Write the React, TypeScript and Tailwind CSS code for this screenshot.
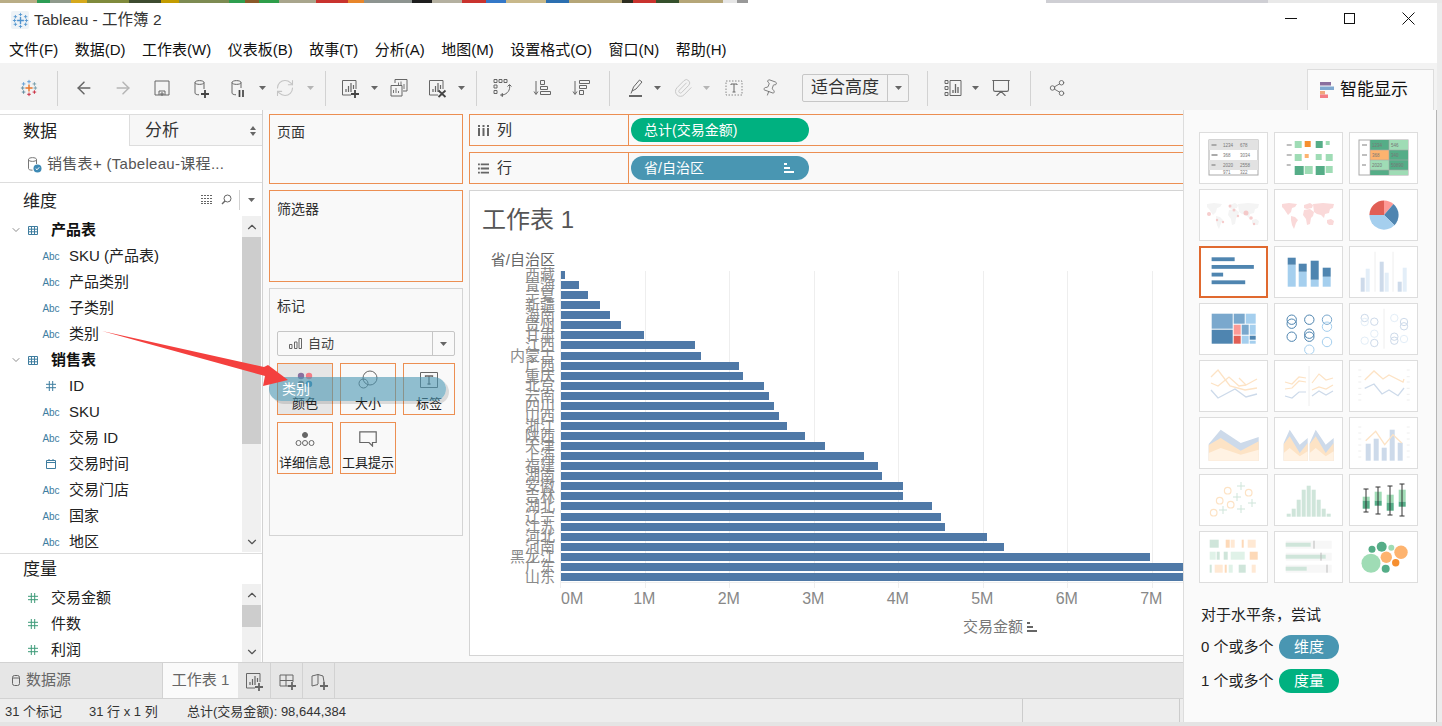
import React from "react";
import { ArrowLeft, ArrowRight, ChevronDown, ChevronUp, Paperclip, Pin, Presentation, RefreshCw, Share2 } from "lucide-react";

const stripColors: [number, string][] = [
  [37, "#b9ad86"], [13, "#2d9d55"], [21, "#8f9a8c"], [16, "#d6a91c"], [42, "#7f8a3c"], [32, "#3d4b30"], [18, "#c39c00"],
  [50, "#7d8b52"], [16, "#2f9e4f"], [14, "#8a5a2a"], [20, "#2e9e4a"], [37, "#a8a58c"], [32, "#c9332e"], [16, "#e8862a"],
  [48, "#8d9490"], [20, "#1e1e1e"], [30, "#b4b0a0"], [24, "#c9332e"], [20, "#3478c8"], [40, "#c8b88a"], [23, "#2c6fb0"],
  [53, "#b5a678"], [11, "#2e2e20"], [23, "#c9332e"], [23, "#35502c"], [44, "#b5a678"], [14, "#e6e6e6"], [11, "#999999"],
  [298, "#ffffff"], [222, "#cfcfd4"],
];

const STEEL = "#4f85b0";
const SKY = "#a5cfee";
const MINT = "#9fdcb5";
const JADE = "#55ad87";
const AMBER = "#fdb36f";
const FOG = "#cddaea";
const PEACH = "#fde3c5";
const CREAM = "#fff2e3";
const SAGE = "#cfe5da";

const provinces: [string, number][] = [
  ["西藏", 4], ["青海", 18], ["宁夏", 27], ["新疆", 39], ["海南", 49], ["贵州", 60], ["甘肃", 83], ["江西", 134],
  ["内蒙古", 140], ["广西", 178], ["重庆", 182], ["北京", 203], ["云南", 208], ["四川", 213], ["山西", 218], ["浙江", 226],
  ["陕西", 244], ["天津", 264], ["上海", 303], ["福建", 317], ["湖南", 321], ["安徽", 342], ["吉林", 342], ["湖北", 371],
  ["辽宁", 380], ["江苏", 384], ["河北", 426], ["河南", 443], ["黑龙江", 589], ["广东", 640], ["山东", 640],
];

const Caret = ({ color = "#666666" }: { color?: string }) => (
  <svg width="7" height="4" viewBox="0 0 7 4" className="shrink-0"><path d="M0 0h7L3.5 4z" fill={color} /></svg>
);

const Sep = ({ className }: { className: string }) => <div className={`h-[35px] w-px shrink-0 bg-[#d2d2d2] ${className}`} />;

const Icon = ({ className = "", children }: { className?: string; children: React.ReactNode }) => (
  <svg width="20" height="20" viewBox="0 0 20 20" fill="none" stroke="#666666" strokeWidth="1" className={`shrink-0 ${className}`}>{children}</svg>
);

const PlusMark = ({ x = 15, y = 16, color = "#444444" }: { x?: number; y?: number; color?: string }) => (
  <path d={`M${x - 4} ${y}h8M${x} ${y - 4}v8`} stroke={color} strokeWidth="1.8" />
);

const BarsInFrame = () => (
  <>
    <path d="M11 17H2.5V2.5H16V11" />
    <path d="M6 14v-3M8.5 14V8M11 14V5M13.5 11V7" strokeWidth="1.2" />
  </>
);

const TableauMark = ({ size, colors }: { size: number; colors: string[] }) => (
  <svg width={size} height={size} viewBox="0 0 20 20" strokeWidth="1" className="shrink-0">
    <path d="M10 6v8M6 10h8" stroke={colors[0]} strokeWidth="1.6" />
    <path d="M10 1v4M8 3h4" stroke={colors[1]} />
    <path d="M10 15v4M8 17h4" stroke={colors[2]} />
    <path d="M1 10h4M3 8v4" stroke={colors[3]} />
    <path d="M15 10h4M17 8v4" stroke={colors[4]} />
    <path d="M4 3.5v4M2 5.5h4" stroke={colors[1]} />
    <path d="M16 3.5v4M14 5.5h4" stroke={colors[4]} />
    <path d="M4 12.5v4M2 14.5h4" stroke={colors[3]} />
    <path d="M16 12.5v4M14 14.5h4" stroke={colors[2]} />
  </svg>
);

const TableGlyph = () => (
  <svg width="10" height="9" viewBox="0 0 10 9" fill="none" stroke="#3e7d9f" strokeWidth="1" className="shrink-0">
    <path d="M.5.5h9v8h-9zM.5 3.2h9M.5 5.8h9M3.5.5v8M6.5.5v8" />
  </svg>
);

const HashGlyph = ({ color }: { color: string }) => (
  <svg width="10" height="10" viewBox="0 0 10 10" fill="none" stroke={color} strokeWidth="1" className="shrink-0">
    <path d="M3.3 0v10M6.7 0v10M0 3.3h10M0 6.7h10" />
  </svg>
);

const SortGlyph = ({ color = "#666666" }: { color?: string }) => (
  <svg width="11" height="10" viewBox="0 0 11 10" className="shrink-0" fill={color}>
    <path d="M0 0h3v2H0zM0 4h6v2H0zM0 8h10v2H0z" />
  </svg>
);

const Field = ({ kind, name }: { kind: "abc" | "num" | "date"; name: string }) => (
  <div className="flex h-[26px] items-center pl-[43px]">
    <div className="flex w-[16px] justify-center">
      {kind === "abc" && <span className="text-[10px] text-[#3e7d9f]">Abc</span>}
      {kind === "num" && <HashGlyph color="#3e7d9f" />}
      {kind === "date" && (
        <svg width="10" height="10" viewBox="0 0 10 10" fill="none" stroke="#3e7d9f"><path d="M.5 1.5h9v8h-9zM.5 3.5h9M3 0v2M7 0v2" /></svg>
      )}
    </div>
    <span className="ml-[10px] text-[15px] text-[#222222]">{name}</span>
  </div>
);

const TableHead = ({ name }: { name: string }) => (
  <div className="flex h-[26px] items-center pl-[10px]">
    <ChevronDown size={12} color="#666666" strokeWidth={1.5} />
    <div className="ml-[6px] flex w-[10px]"><TableGlyph /></div>
    <span className="ml-[13px] text-[15px] font-bold text-[#111111]">{name}</span>
  </div>
);

const Measure = ({ name }: { name: string }) => (
  <div className="flex h-[26px] items-center pl-[28px]">
    <HashGlyph color="#3c9a78" />
    <span className="ml-[13px] text-[15px] text-[#222222]">{name}</span>
  </div>
);

const ScrollBar = ({ thumbClass }: { thumbClass: string }) => (
  <div className="mr-px flex w-[19px] shrink-0 flex-col bg-[#f0f0f0]">
    <div className="flex h-[21px] shrink-0 items-center justify-center"><ChevronUp size={14} color="#555555" strokeWidth={2} /></div>
    <div className={`shrink-0 bg-[#cdcdcd] ${thumbClass}`} />
    <div className="flex-1" />
    <div className="flex h-[21px] shrink-0 items-center justify-center"><ChevronDown size={14} color="#555555" strokeWidth={2} /></div>
  </div>
);

const MarkBtn = ({ label, active, children }: { label: string; active?: boolean; children: React.ReactNode }) => (
  <div className={`flex h-[52px] flex-col items-center border border-[#ec8f52] ${active ? "bg-[#e6e6e6]" : ""}`}>
    <div className="flex h-[32px] w-full items-center justify-center">{children}</div>
    <span className="text-[13px] leading-[16px] whitespace-nowrap text-[#222222]">{label}</span>
  </div>
);

const Shelf = ({ icon, label, pill, color, sorted }: { icon: React.ReactNode; label: string; pill: string; color: string; sorted?: boolean }) => (
  <div className="flex h-[32px] w-[740px] border border-[#ec8f52]">
    <div className="flex w-[159px] shrink-0 items-center border-r border-[#ec8f52] pl-[8px]">
      <div className="flex w-[11px] justify-center">{icon}</div>
      <span className="ml-[8px] text-[15px] text-[#333333]">{label}</span>
    </div>
    <div className="flex items-center pl-[2px]">
      <div className={`flex h-[24px] w-[178px] items-center justify-between rounded-full pr-[14px] pl-[13px] text-[14px] text-white ${color}`}>
        <span>{pill}</span>
        {sorted && <SortGlyph color="#ffffff" />}
      </div>
    </div>
  </div>
);

const TextRows = ({ rows, x }: { rows: [number, string, string][]; x: [number, number] }) => (
  <g fontSize="4.5" fill="#777777" stroke="none">
    {rows.map(([y, a, b]) => (
      <React.Fragment key={y}>
        <text x={x[0]} y={y}>{a}</text>
        <text x={x[1]} y={y}>{b}</text>
      </React.Fragment>
    ))}
  </g>
);

const World = ({ fill }: { fill: string }) => (
  <g fill={fill}>
    <path d="M8 15l7-1 8 1-2 3-3 1-1 4-3 3-2-3-2-3-2-2z" />
    <path d="M17 27l4 1 3 3-2 3-2 6-2-4-1-5z" />
    <path d="M30 16l6-2 3 2-1 3-5 1-3-1z" />
    <path d="M30 21l6-1 4 3-1 4-2 2-1 6-3 1-1-6-3-4z" />
    <path d="M39 15l10-1 11 1-1 4-3 1-1 4-4 1-1 4-3-3-4-1-3-2z" />
    <path d="M53 31l4-1 3 2-1 4-4 0-2-2z" />
  </g>
);

const thumbs: React.ReactNode[] = [
  <>
    <rect x="10" y="8" width="49" height="35" fill="#fff" stroke="#aaaaaa" />
    <path d="M10 8h49v10H10zM10 28h49v10H10z" fill="#e2e2e2" />
    <path d="M12.5 13h5M12.5 23h6M12.5 33h4" stroke="#aaaaaa" strokeWidth="2" />
    <TextRows rows={[[15, "1234", "678"], [25, "368", "3034"], [35, "2020", "2558"], [41.5, "971", "322"]]} x={[24, 41]} />
  </>,
  <>
    <path d="M12.7 13h5M12.7 23h5M12.7 33h4" stroke="#aaaaaa" strokeWidth="1.5" />
    <rect x="20.7" y="9" width="7" height="7" fill={MINT} />
    <rect x="30.7" y="9" width="6" height="6" fill="#f68f2f" />
    <rect x="41.7" y="9" width="7" height="7" fill={JADE} />
    <rect x="51.7" y="9" width="4" height="4" fill={MINT} />
    <rect x="20.7" y="22" width="7" height="7" fill={MINT} />
    <rect x="30.7" y="22" width="4" height="4" fill={AMBER} />
    <rect x="41.7" y="22" width="6" height="6" fill={MINT} />
    <rect x="51.7" y="22" width="7" height="7" fill={MINT} />
    <rect x="20.7" y="34" width="9" height="9" fill={JADE} />
    <rect x="30.7" y="34" width="8" height="8" fill={MINT} />
    <rect x="41.7" y="34" width="9" height="9" fill={JADE} />
    <rect x="51.7" y="34" width="7" height="7" fill={MINT} />
  </>,
  <>
    <rect x="10" y="8" width="49" height="35" fill="#fff" stroke="#aaaaaa" />
    <path d="M13 13h5M13 23h5M13 33h4" stroke="#aaaaaa" strokeWidth="1.5" />
    <rect x="21" y="8" width="19" height="10" fill={JADE} />
    <rect x="40" y="8" width="19" height="10" fill={MINT} />
    <rect x="21" y="18" width="19" height="10" fill={AMBER} />
    <rect x="40" y="18" width="19" height="10" fill={JADE} />
    <rect x="21" y="28" width="19" height="10" fill={MINT} />
    <rect x="40" y="28" width="19" height="10" fill={JADE} />
    <rect x="21" y="38" width="19" height="5" fill={JADE} />
    <rect x="40" y="38" width="19" height="5" fill={MINT} />
    <path d="M21 18h38M21 28h38M21 38h38M40 8v35M21 8v35" stroke="#aaaaaa" strokeWidth=".6" />
    <TextRows rows={[[14.5, "1234", "546"], [24.5, "368", "340"], [34.5, "2020", "50890"]]} x={[23, 42]} />
  </>,
  <>
    <World fill="#f4f4f4" />
    <g fill="#f4b8b8" opacity=".7">
      <circle cx="10" cy="25" r="2" /><circle cx="31" cy="17" r="1.5" /><circle cx="35" cy="21" r="1.5" />
      <circle cx="47" cy="24" r="2.5" /><circle cx="39" cy="27" r="1.2" /><circle cx="52" cy="29" r="1.8" />
      <circle cx="18" cy="31" r="1.2" /><circle cx="55" cy="35" r="1.2" /><circle cx="24" cy="33" r="1.2" />
    </g>
  </>,
  <World fill="#fad9d9" />,
  <>
    <path d="M35 26L20.4 26A14.6 14.6 0 0 1 35 11.4Z" fill="#e15f55" />
    <path d="M35 26L35 11.4A14.6 14.6 0 0 1 44.5 15Z" fill="#fd9a96" />
    <path d="M35 26L44.5 15A14.6 14.6 0 0 1 45.5 36.2Z" fill={STEEL} />
    <path d="M35 26L45.5 36.2A14.6 14.6 0 0 1 20.4 26Z" fill={SKY} />
  </>,
  <g fill={STEEL}>
    <rect x="11.7" y="10.7" width="24" height="4" />
    <rect x="11.7" y="18.7" width="44" height="4" />
    <rect x="11.7" y="26.7" width="12" height="4" />
    <rect x="11.7" y="34.7" width="35" height="4" />
  </g>,
  <>
    <rect x="13.7" y="18.7" width="8" height="22" fill={SKY} /><rect x="13.7" y="11.7" width="8" height="7" fill={STEEL} />
    <rect x="24.7" y="25.7" width="8" height="15" fill={SKY} /><rect x="24.7" y="17.7" width="8" height="8" fill={STEEL} />
    <rect x="36.7" y="33.7" width="8" height="7" fill={SKY} /><rect x="36.7" y="14.7" width="8" height="19" fill={STEEL} />
    <rect x="48.7" y="30.7" width="8" height="10" fill={SKY} /><rect x="48.7" y="21.7" width="8" height="9" fill={STEEL} />
  </>,
  <>
    <path d="M26 5.7v40M44 5.7v40" stroke="#eeeeee" />
    <rect x="11.7" y="31.7" width="4" height="14" fill={FOG} /><rect x="16.7" y="22.7" width="4" height="23" fill="#e3eef8" />
    <rect x="30.7" y="15.7" width="4" height="30" fill={FOG} /><rect x="35.7" y="26.7" width="4" height="19" fill="#e3eef8" />
    <rect x="48.7" y="35.7" width="4" height="10" fill={FOG} /><rect x="53.7" y="21.7" width="4" height="24" fill="#e3eef8" />
  </>,
  <>
    <rect x="12.7" y="10.7" width="21" height="15" fill="#7aa8cd" /><rect x="12.7" y="26.7" width="21" height="14" fill={STEEL} />
    <rect x="34.7" y="10.7" width="11" height="10" fill="#7aa8cd" /><rect x="46.7" y="10.7" width="10" height="10" fill={SKY} />
    <rect x="34.7" y="21.7" width="7" height="10" fill="#fd9a96" /><rect x="42.7" y="21.7" width="7" height="10" fill="#7aa8cd" />
    <rect x="50.7" y="21.7" width="6" height="10" fill={SKY} /><rect x="34.7" y="32.7" width="7" height="8" fill="#e15f55" />
    <rect x="42.7" y="32.7" width="7" height="8" fill={SKY} /><rect x="50.7" y="32.7" width="6" height="4" fill={STEEL} />
    <rect x="50.7" y="37.7" width="6" height="3" fill={SKY} />
  </>,
  <g fill="none" strokeWidth="1">
    <g stroke={STEEL}>
      <circle cx="17.7" cy="16.7" r="4.7" /><circle cx="17.7" cy="20.7" r="4.7" /><circle cx="17.7" cy="33.7" r="4.7" />
      <circle cx="35.3" cy="16.7" r="4.7" /><circle cx="35.3" cy="30.7" r="4.7" /><circle cx="35.3" cy="33.7" r="4.7" />
    </g>
    <g stroke="#7aa8cd"><circle cx="53" cy="16.7" r="4.7" /></g>
    <g stroke={SKY}><circle cx="53" cy="23.7" r="4.7" /><circle cx="53" cy="39" r="4.7" /><circle cx="35.3" cy="46.7" r="4.7" /></g>
  </g>,
  <>
    <path d="M35 5.7v40" stroke="#eeeeee" />
    <g fill="none" stroke={FOG} strokeWidth="1">
      <circle cx="15.7" cy="15" r="3.7" /><circle cx="25.3" cy="18.7" r="3.7" /><circle cx="25.3" cy="40" r="3.7" />
      <circle cx="55" cy="19" r="3.7" /><circle cx="55" cy="23.3" r="3.7" /><circle cx="45.3" cy="33.7" r="3.7" /><circle cx="45.3" cy="37.7" r="3.7" />
    </g>
    <g fill="none" stroke="#e3eef8" strokeWidth="1">
      <circle cx="15.7" cy="19" r="3.7" /><circle cx="25.3" cy="30.7" r="3.7" /><circle cx="15.7" cy="37.7" r="3.7" />
      <circle cx="45.3" cy="15" r="3.7" /><circle cx="55" cy="36" r="3.7" />
    </g>
  </>,
  <g fill="none" strokeWidth="1.3">
    <polyline points="12,17 19,10 31,26 46,30 58,28" stroke={PEACH} />
    <polyline points="12,23 19,26 30,17 40,26 47,25" stroke={PEACH} />
    <polyline points="40,18 47,25 58,19" stroke={PEACH} />
    <polyline points="12,30 19,38 36,29 47,37 58,34" stroke={FOG} />
  </g>,
  <>
    <path d="M35 6v40" stroke="#eeeeee" />
    <g fill="none" strokeWidth="1.2">
      <polyline points="11,22 18,24 25,17 32,18" stroke={PEACH} />
      <polyline points="11,29 18,28 25,21 32,22" stroke={PEACH} />
      <polyline points="11,36 18,38 25,32 32,32" stroke={FOG} />
      <polyline points="38,23 45,14 52,20 59,18" stroke={PEACH} />
      <polyline points="38,30 45,27 52,29 59,25" stroke={PEACH} />
      <polyline points="38,36 45,31 52,35 59,31" stroke={FOG} />
    </g>
  </>,
  <>
    <path d="M9.3 10h3M9.3 16.7h3M9.3 22h3M9.3 28.3h3M9.3 34.3h3M9.3 40h3M57.7 10h3M57.7 16.7h3M57.7 22h3M57.7 28.3h3M57.7 34.3h3M57.7 40h3" stroke="#eeeeee" />
    <polyline points="15.7,20 25,11 34,19 40,15 54,22 55,19" fill="none" stroke={PEACH} strokeWidth="1.3" />
    <polyline points="15.7,28.3 25,24 33,34 40,30 49,35.7 55,28" fill="none" stroke={FOG} strokeWidth="1.3" />
  </>,
  <>
    <path d="M9.7 27L21.7 12.7 41.7 26 59.7 20V43.7H9.7Z" fill={FOG} />
    <path d="M9.7 28L21.7 21 41.7 33.7 59.7 24.3V43.7H9.7Z" fill={PEACH} />
    <path d="M9.7 36L21.7 31 41.7 37.7 59.7 32.7V43.7H9.7Z" fill={CREAM} />
  </>,
  <>
    <path d="M9.7 26L15.7 12.7 25.7 27.7 33.7 21V43.7H9.7Z" fill={FOG} />
    <path d="M9.7 27L15.7 19.3 25.7 36 33.7 26V43.7H9.7Z" fill={PEACH} />
    <path d="M9.7 36L15.7 31 25.7 39.3 33.7 34.3V43.7H9.7Z" fill={CREAM} />
    <path d="M35.7 26L41.7 12.7 51.7 27.7 59.7 21V43.7H35.7Z" fill={FOG} />
    <path d="M35.7 27L41.7 19.3 51.7 36 59.7 26V43.7H35.7Z" fill={PEACH} />
    <path d="M35.7 36L41.7 31 51.7 39.3 59.7 34.3V43.7H35.7Z" fill={CREAM} />
  </>,
  <>
    <path d="M9.3 10h3M9.3 16h3M9.3 22h3M9.3 28h3M9.3 34h3M9.3 40h3M57.7 10h3M57.7 16h3M57.7 22h3M57.7 28h3M57.7 34h3M57.7 40h3" stroke="#eeeeee" />
    <g fill={FOG}>
      <rect x="16.7" y="26.7" width="5" height="17" /><rect x="24.7" y="21.7" width="5" height="22" /><rect x="32.7" y="30.7" width="5" height="13" />
      <rect x="40.7" y="12.7" width="5" height="31" /><rect x="48.7" y="25.7" width="5" height="18" />
    </g>
    <polyline points="16.7,23.7 26.7,14.3 35.7,27.7 44,17.7 52.7,26" fill="none" stroke={PEACH} strokeWidth="1.3" />
  </>,
  <>
    <g fill="none" stroke={PEACH} strokeWidth="1.2">
      <circle cx="28.7" cy="16.7" r="3.3" /><circle cx="49.7" cy="18.7" r="3.3" /><circle cx="20.7" cy="26.7" r="3.3" />
      <circle cx="31.7" cy="30.7" r="3.3" /><circle cx="14.7" cy="38.7" r="3.3" />
    </g>
    <path d="M38 12h8M42 8v8M34 23h8M38 19v8M49 29h8M53 25v8M20 36h8M24 32v8M38 35h8M42 31v8" stroke={SAGE} strokeWidth="1" />
  </>,
  <g fill={SAGE}>
    {[39.7, 34.7, 25.7, 15.7, 11.7, 15.7, 25.7, 34.7, 39.7].map((y, i) => (
      <rect key={i} x={12.7 + i * 5} y={y} width="4" height={42.7 - y} />
    ))}
  </g>,
  <>
    {[[13.7, 22.7, 26.7, 34.7], [25.7, 17.7, 26.7, 31.7], [37.7, 20.7, 28.7, 36.7], [49.7, 15.7, 27.7, 32.7]].map(([x, a, b, c]) => (
      <React.Fragment key={x}>
        <rect x={x} y={a} width="7" height={b - a} fill={MINT} />
        <rect x={x} y={b} width="7" height={c - b} fill={JADE} />
      </React.Fragment>
    ))}
    <path d="M17 15v23M14.5 15h5M14.5 38h5M29 13v27M26.5 13h5M26.5 40h5M41 12v29M38.5 12h5M38.5 41h5M53 10v32M50.5 10h5M50.5 42h5" stroke="#333333" strokeWidth="1" />
  </>,
  <>
    <rect x="10.7" y="8.7" width="9" height="8" fill={SAGE} /><rect x="26.7" y="8.7" width="4" height="8" fill="#fdd9b8" /><rect x="31.7" y="8.7" width="4" height="8" fill="#ffe9d4" />
    <rect x="42.7" y="8.7" width="2" height="8" fill="#fdd9b8" /><rect x="48.7" y="8.7" width="8" height="8" fill="#ffe9d4" />
    <rect x="10.7" y="20.7" width="6" height="8" fill="#e0f2e8" /><rect x="17.7" y="20.7" width="3" height="8" fill={SAGE} /><rect x="24.7" y="20.7" width="4" height="8" fill={SAGE} />
    <rect x="31.7" y="20.7" width="14" height="8" fill="#e0f2e8" /><rect x="50.7" y="20.7" width="8" height="8" fill="#fdd9b8" />
    <rect x="10.7" y="33.7" width="2" height="8" fill={SAGE} /><rect x="15.7" y="33.7" width="8" height="8" fill="#ffe9d4" /><rect x="25.7" y="33.7" width="2" height="8" fill="#fdd9b8" />
    <rect x="29.7" y="33.7" width="4" height="8" fill="#e0f2e8" /><rect x="39.7" y="33.7" width="7" height="8" fill={SAGE} /><rect x="52.7" y="33.7" width="4" height="8" fill="#ffe9d4" />
  </>,
  <>
    {[[9.7, 25, 40], [21.7, 40, 47], [33.7, 21, 53]].map(([y, w, m]) => (
      <React.Fragment key={y}>
        <rect x="11.7" y={y} width="46" height="8" fill="#f7f7f7" />
        <rect x="11.7" y={y + 2} width={w} height="4" fill={SAGE} />
        <path d={`M${m} ${y}v8`} stroke="#bbbbbb" strokeWidth="1" />
      </React.Fragment>
    ))}
  </>,
  <>
    <circle cx="22" cy="32.3" r="9.5" fill={MINT} /><circle cx="23" cy="18.3" r="3.5" fill={JADE} /><circle cx="32.7" cy="15.7" r="5" fill={JADE} />
    <circle cx="42.3" cy="16.7" r="3" fill={MINT} /><circle cx="37.3" cy="26.3" r="5.7" fill={AMBER} /><circle cx="52" cy="21.3" r="6.7" fill={AMBER} />
    <circle cx="46.7" cy="31.7" r="3.7" fill="#f68f2f" /><circle cx="36.7" cy="37.7" r="4" fill={JADE} />
  </>,
];

export default function App() {
  return (
    <div className="relative flex h-[726px] w-[1442px] flex-col overflow-hidden bg-[#e9e9e9] font-[family-name:'Liberation_Sans','Noto_Sans_CJK_SC',sans-serif] text-[#222222]">
      <div className="flex h-[3px] shrink-0">
        {stripColors.map(([w, c], i) => (
          <div key={i} className="h-full" style={{ width: w, backgroundColor: c }} />
        ))}
      </div>

      <div className="flex min-h-0 flex-1">
        <div className="flex w-[1437px] shrink-0 flex-col">
          {/* title bar */}
          <div className="flex h-[35px] shrink-0 items-center bg-white pb-px pl-[11px]">
            <div className="flex h-[18px] w-[18px] items-center justify-center rounded-[2px] bg-[#eef3f7]">
              <TableauMark size={17} colors={["#4f93cf", "#4f93cf", "#4f93cf", "#4f93cf", "#4f93cf"]} />
            </div>
            <span className="ml-[5px] text-[15.5px] text-[#333333]">Tableau - 工作簿 2</span>
            <div className="mb-[3px] ml-auto flex items-center">
              <div className="h-px w-[12px] bg-[#111111]" />
              <div className="ml-[47px] h-[11px] w-[11px] border border-[#111111]" />
              <svg width="13" height="13" viewBox="0 0 13 13" className="mr-[22px] ml-[47px]" stroke="#111111"><path d="M.5.5l12 12M12.5.5l-12 12" /></svg>
            </div>
          </div>
          {/* menu */}
          <div className="flex h-[25px] shrink-0 items-center gap-[16.5px] bg-white pl-[9px] text-[15px] text-[#111111]">
            {["文件(F)", "数据(D)", "工作表(W)", "仪表板(B)", "故事(T)", "分析(A)", "地图(M)", "设置格式(O)", "窗口(N)", "帮助(H)"].map((m) => (
              <span key={m}>{m}</span>
            ))}
          </div>
          {/* toolbar */}
          <div className="flex h-[47px] shrink-0 items-center bg-[#f3f3f3] pt-[3px]">
            <div className="ml-[20px]"><TableauMark size={18} colors={["#e8762c", "#5b9bd5", "#c72035", "#59879b", "#7099a6"]} /></div>
            <Sep className="ml-[19px]" />
            <ArrowLeft size={20} color="#666666" strokeWidth={1.8} className="ml-[16px]" />
            <ArrowRight size={20} color="#b5b5b5" strokeWidth={1.8} className="ml-[19px]" />
            <Icon className="ml-[19px]">
              <path d="M3 3h14v14H3z" /><path d="M7 17v-4h6v4M9 15h2v2H9z" />
            </Icon>
            <Icon className="ml-[19px]">
              <path d="M4 4.5c0-2.5 9-2.5 9 0V11M4 4.5c0 2.5 9 2.5 9 0M4 4.5V15c0 1 1.5 1.7 4 1.8" /><PlusMark x={14} y={16} />
            </Icon>
            <Icon className="ml-[17px]">
              <path d="M4 4.5c0-2.5 9-2.5 9 0V10M4 4.5c0 2.5 9 2.5 9 0M4 4.5V15c0 1 1.5 1.7 4 1.8" /><path d="M11.5 12v7M15 12v7" stroke="#444444" strokeWidth="1.7" />
            </Icon>
            <div className="ml-[11px]"><Caret /></div>
            <RefreshCw size={20} color="#c4c4c4" strokeWidth={1.3} className="ml-[9px]" />
            <div className="ml-[12px]"><Caret color="#b5b5b5" /></div>
            <Sep className="ml-[11px]" />
            <Icon className="ml-[14px]"><BarsInFrame /><PlusMark x={15} y={16} /></Icon>
            <div className="ml-[11px]"><Caret /></div>
            <Icon className="ml-[11px]">
              <path d="M6 5V1.5h12V13h-4" /><path d="M2 7.5h11V18H2z" /><path d="M4.5 15v-3M7 15v-5M9.500 15v-2M9.5 4.5V7M12 3.5V7M15 6v5" strokeWidth=".9" />
            </Icon>
            <Icon className="ml-[18px]">
              <BarsInFrame /><path d="M11.5 12.5l7 6.5M18.5 12.5l-7 6.5" stroke="#444444" strokeWidth="1.8" />
            </Icon>
            <div className="ml-[11px]"><Caret /></div>
            <Sep className="ml-[11px]" />
            <Icon className="ml-[15px]">
              <path d="M2 1.5h3v3H2zM7 1.5h3v3H7zM12 1.5h3v3h-3zM2 7h3v3H2zM2 12.5h3v3H2z" />
              <path d="M17.5 7c1 5-2 9-7 10M8.5 17l2-1.5v3zM15.500 8.500l2-2 2 2" />
            </Icon>
            <Icon className="ml-[20px]">
              <path d="M4 3v13M2 13.5l2 3 2-3" /><path d="M8.5 2.5h4v4h-4zM8.5 8.5h7v3h-7zM8.5 13.5h10v3h-10z" />
            </Icon>
            <Icon className="ml-[19px]">
              <path d="M4 3v13M2 13.5l2 3 2-3" /><path d="M8.5 2.5h10v3h-10zM8.5 7.5h7v3h-7zM8.5 12.5h4v4h-4z" />
            </Icon>
            <Sep className="ml-[18px]" />
            <Icon className="ml-[16px]">
              <path d="M6 13l1.5-4 6-7 2.5 2-6 7z" /><path d="M6 13l-1 2.5" />
              <path d="M3 18h13" stroke="#444444" strokeWidth="1.6" />
            </Icon>
            <div className="ml-[8px]"><Caret /></div>
            <Paperclip size={20} color="#c8c8c8" strokeWidth={1.2} className="ml-[12px]" />
            <div className="ml-[10px]"><Caret color="#b5b5b5" /></div>
            <Icon className="ml-[14px]">
              <path d="M2 3h16v14H2z" strokeDasharray="1.5 1.5" stroke="#888888" /><path d="M7 7V6h6v1M10 6v8M8.5 14h3" />
            </Icon>
            <Pin size={18} color="#666666" strokeWidth={1} className="ml-[17px] rotate-[20deg]" />
            <div className="ml-[23px] flex h-[28px] w-[107px] shrink-0 items-center rounded-[2px] border border-[#c6c6c6]">
              <span className="w-[84px] pl-[8px] text-[17px] whitespace-nowrap text-[#333333]">适合高度</span>
              <div className="flex h-full flex-1 items-center justify-center border-l border-[#c6c6c6]"><Caret /></div>
            </div>
            <Sep className="ml-[18px]" />
            <Icon className="ml-[15px]">
              <path d="M2 2.5h3v3H2zM2 8.500h3v3H2zM2 14.500h3v3H2zM7 2.500h11v15H7z" /><path d="M10 15v-3M12.5 15V6M15 15v-6" strokeWidth="1.3" />
            </Icon>
            <div className="ml-[9px]"><Caret /></div>
            <Presentation size={20} color="#666666" strokeWidth={1.3} className="ml-[12px]" />
            <Sep className="ml-[19px]" />
            <Share2 size={18} color="#666666" strokeWidth={1.2} className="ml-[17px]" />
            <div className="ml-[241px] flex h-[41px] w-[127px] shrink-0 items-center self-end border-x border-t border-[#dddddd] bg-[#fafafa] pl-[12px]">
              <svg width="14" height="16" viewBox="0 0 14 16" className="shrink-0">
                <rect width="11" height="3.5" fill="#8a6f9e" /><rect y="4.5" width="14" height="3.5" fill="#7fa8d0" />
                <rect y="9" width="5" height="3.5" fill="#f0a77e" /><rect y="12.5" width="8" height="3.5" fill="#f47c85" />
              </svg>
              <span className="ml-[6px] text-[17px] whitespace-nowrap text-[#111111]">智能显示</span>
            </div>
          </div>

          <div className="flex min-h-0 flex-1">
            <div className="flex w-[1183px] shrink-0 flex-col">
              <div className="flex h-[552px] shrink-0">
                {/* data pane */}
                <div className="flex w-[263px] shrink-0 flex-col border-r border-[#d2d2d2] bg-white pt-[4px]">
                  <div className="flex h-[32px] shrink-0 border-t border-[#dddddd]">
                    <div className="flex w-[129px] items-center pt-[2px] pl-[23px] text-[17px] text-[#222222]">数据</div>
                    <div className="flex flex-1 items-center border-b border-l border-[#dddddd] bg-[#f7f7f7] pt-[2px] pl-[15px] text-[17px] text-[#333333]">
                      <span>分析</span>
                      <div className="mr-[6px] ml-auto flex flex-col gap-[2px]">
                        <svg width="6" height="4" viewBox="0 0 6 4"><path d="M0 4h6L3 0z" fill="#666666" /></svg>
                        <svg width="6" height="4" viewBox="0 0 6 4"><path d="M0 0h6L3 4z" fill="#666666" /></svg>
                      </div>
                    </div>
                  </div>
                  <div className="flex h-[37px] shrink-0 items-center border-b border-[#dddddd] pl-[27px]">
                    <svg width="15" height="17" viewBox="0 0 15 17" fill="none" className="shrink-0">
                      <path d="M1.5 3.5c0-2.5 8-2.5 8 0V8M1.5 3.5c0 2.5 8 2.5 8 0M1.5 3.5v9c0 1 1.5 1.7 4 1.7" stroke="#777777" />
                      <circle cx="10.5" cy="12.5" r="4" fill="#3e8ab5" />
                      <path d="M8.7 12.5l1.3 1.3 2.2-2.5" stroke="#ffffff" />
                    </svg>
                    <span className="ml-[5px] text-[15px] tracking-[0.3px] whitespace-nowrap text-[#555555]">销售表+ (Tabeleau-课程...</span>
                  </div>
                  <div className="flex h-[33px] shrink-0 items-center pl-[23px]">
                    <span className="pt-[4px] text-[17px] text-[#222222]">维度</span>
                    <svg width="12" height="9" viewBox="0 0 12 9" stroke="#666666" className="ml-auto" strokeDasharray="2 1">
                      <path d="M0 .5h12M0 3.5h12M0 6.500h12M0 8.500h12" />
                    </svg>
                    <svg width="11" height="11" viewBox="0 0 11 11" fill="none" stroke="#666666" className="ml-[8px]"><circle cx="6.5" cy="4.5" r="3.5" /><path d="M4 7l-3 3" strokeWidth="1.5" /></svg>
                    <div className="ml-[7px] h-[20px] w-px bg-[#d2d2d2]" />
                    <div className="mr-[7px] ml-[8px]"><Caret /></div>
                  </div>
                  <div className="flex h-[336px] shrink-0">
                    <div className="min-w-0 flex-1 overflow-hidden pt-px">
                      <TableHead name="产品表" />
                      <Field kind="abc" name="SKU (产品表)" />
                      <Field kind="abc" name="产品类别" />
                      <Field kind="abc" name="子类别" />
                      <Field kind="abc" name="类别" />
                      <TableHead name="销售表" />
                      <Field kind="num" name="ID" />
                      <Field kind="abc" name="SKU" />
                      <Field kind="abc" name="交易 ID" />
                      <Field kind="date" name="交易时间" />
                      <Field kind="abc" name="交易门店" />
                      <Field kind="abc" name="国家" />
                      <Field kind="abc" name="地区" />
                    </div>
                    <ScrollBar thumbClass="h-[207px]" />
                  </div>
                  <div className="mt-px h-px shrink-0 bg-[#dddddd]" />
                  <div className="flex h-[30px] shrink-0 items-center pt-[2px] pl-[23px] text-[17px] text-[#222222]">度量</div>
                  <div className="flex min-h-0 flex-1">
                    <div className="min-w-0 flex-1 overflow-hidden pt-px">
                      <Measure name="交易金额" />
                      <Measure name="件数" />
                      <Measure name="利润" />
                    </div>
                    <ScrollBar thumbClass="h-[22px]" />
                  </div>
                </div>

                {/* shelves + view */}
                <div className="flex min-w-0 flex-1 gap-[6px] overflow-hidden bg-[#f9f9f9] pt-[4px] pl-[6px]">
                  <div className="flex w-[194px] shrink-0 flex-col gap-[6px]">
                    <div className="h-[70px] border border-[#ec8f52] px-[7px] py-[7px] text-[14px] text-[#333333]">页面</div>
                    <div className="h-[92px] border border-[#ec8f52] px-[7px] py-[8px] text-[14px] text-[#333333]">筛选器</div>
                    <div className="h-[248px] border border-[#d4d4d4] px-[7px] pt-[7px]">
                      <div className="text-[14px] text-[#333333]">标记</div>
                      <div className="mt-[14px] flex h-[25px] items-center rounded-[2px] border border-[#c6c6c6] pl-[11px]">
                        <svg width="13" height="11" viewBox="0 0 13 11" fill="none" stroke="#666666" className="shrink-0"><path d="M.5 6.5h2.500v4H.5zM5.500 4h2.500v6.500H5.500zM10 .5h2.500v10H10z" /></svg>
                        <span className="ml-[6px] text-[13px] text-[#444444]">自动</span>
                        <div className="ml-auto flex h-full w-[22px] items-center justify-center border-l border-[#c6c6c6]"><Caret /></div>
                      </div>
                      <div className="mt-[7px] grid grid-cols-[56px_56px_52px] gap-x-[7px] gap-y-[7px]">
                        <MarkBtn label="颜色" active>
                          <svg width="18" height="18" viewBox="0 0 18 18"><circle cx="5" cy="5" r="3.2" fill="#8a6f9e" /><circle cx="13" cy="5" r="3.2" fill="#f47c85" /><circle cx="5" cy="13" r="3.2" fill="#7f7f7f" /><circle cx="13" cy="13" r="3.2" fill="#3e8ab5" /></svg>
                        </MarkBtn>
                        <MarkBtn label="大小">
                          <svg width="20" height="20" viewBox="0 0 20 20" fill="none" stroke="#666666"><circle cx="12" cy="8" r="7" /><circle cx="5.5" cy="13.5" r="4.5" /></svg>
                        </MarkBtn>
                        <MarkBtn label="标签">
                          <svg width="18" height="16" viewBox="0 0 18 16" fill="none" stroke="#666666"><path d="M.5.5h17v15H.5z" /><path d="M5.5 5V4h7v1M9 4v8M7.5 12h3" strokeWidth="1.3" /></svg>
                        </MarkBtn>
                        <MarkBtn label="详细信息">
                          <svg width="20" height="16" viewBox="0 0 20 16" fill="none" stroke="#666666"><circle cx="10" cy="4" r="2.5" fill="#666666" /><circle cx="3.5" cy="12" r="2.5" /><circle cx="10" cy="12" r="2.5" /><circle cx="16.5" cy="12" r="2.5" /></svg>
                        </MarkBtn>
                        <MarkBtn label="工具提示">
                          <svg width="18" height="16" viewBox="0 0 18 16" fill="none" stroke="#666666" strokeWidth="1.2"><path d="M.8.8h16.4v10.7h-3.700v3.500l-3.500-3.500H.8z" /></svg>
                        </MarkBtn>
                      </div>
                    </div>
                  </div>

                  <div className="flex w-[740px] shrink-0 flex-col gap-[6px]">
                    <Shelf
                      label="列"
                      pill="总计(交易金额)"
                      color="bg-[#00b180]"
                      icon={<svg width="11" height="11" viewBox="0 0 11 11" fill="#666666"><path d="M0 0h2v2H0zM4.5 0h2v2h-2zM9 0h2v2H9zM0 3h2v8H0zM4.5 3h2v8h-2zM9 3h2v8H9z" /></svg>}
                    />
                    <Shelf
                      label="行"
                      pill="省/自治区"
                      color="bg-[#4996b2]"
                      sorted
                      icon={<svg width="12" height="11" viewBox="0 0 12 11" fill="#666666"><path d="M0 0h2v2H0zM3 0h9v2H3zM0 4.500h2v2H0zM3 4.500h9v2H3zM0 9h2v2H0zM3 9h9v2H3z" /></svg>}
                    />
                    <div className="flex h-[466px] flex-col border border-[#d4d4d4] bg-white">
                      <div className="flex h-[58px] shrink-0 items-center pl-[12px] text-[24px] text-[#555555]">工作表 1</div>
                      <div className="flex h-[22px] w-[85px] shrink-0 items-center justify-end text-[15px] text-[#666666]">省/自治区</div>
                      <div className="relative shrink-0">
                        <div className="absolute top-0 bottom-[-5px] left-[90px] flex border-l border-[#eeeeee]">
                          {[1, 2, 3, 4, 5, 6, 7].map((t) => (
                            <div key={t} className="w-[84.5px] border-r border-[#eeeeee]" />
                          ))}
                        </div>
                        <div className="relative">
                          {provinces.map(([name, w], i) => (
                            <div key={name} className={`flex h-[10px] ${i === 8 || i === 24 ? "mt-px" : ""}`}>
                              <div className="w-[85px] shrink-0 text-right text-[15px] leading-[8px] whitespace-nowrap text-[#8a8a8a]">{name}</div>
                              <div className="ml-[6px] h-[8px] shrink-0 bg-[#4f79a7]" style={{ width: w }} />
                            </div>
                          ))}
                        </div>
                        <div className="relative mt-[-1px] ml-[90px] h-px bg-[#eeeeee]" />
                      </div>
                      <div className="flex h-[32px] shrink-0 items-center text-[16px] text-[#888888]">
                        <div className="w-[91px] shrink-0" />
                        <div className="w-[41px] shrink-0">0M</div>
                        {["1M", "2M", "3M", "4M", "5M", "6M", "7M"].map((t) => (
                          <div key={t} className="w-[84.5px] shrink-0 text-center">{t}</div>
                        ))}
                      </div>
                      <div className="flex h-[24px] shrink-0 items-center pl-[493px] text-[15px] text-[#777777]">
                        <span>交易金额</span>
                        <div className="ml-[4px]"><SortGlyph /></div>
                      </div>
                    </div>
                  </div>
                </div>
              </div>

              {/* sheet tabs */}
              <div className="flex h-[37px] shrink-0 items-stretch border-y border-[#d2d2d2] bg-[#e6e6e6]">
                <div className="flex w-[163px] shrink-0 items-center border-r border-[#d2d2d2] pl-[12px] text-[15px] text-[#666666]">
                  <svg width="8" height="11" viewBox="0 0 8 11" fill="none" stroke="#666666" className="shrink-0"><rect x=".5" y=".5" width="7" height="10" rx="2" /><path d="M.5 3h7" /></svg>
                  <span className="ml-[6px]">数据源</span>
                </div>
                <div className="flex w-[75px] shrink-0 items-center justify-center bg-[#fafafa] text-[15px] whitespace-nowrap text-[#666666]">工作表 1</div>
                <div className="flex w-[33px] items-center justify-center border-r border-[#d2d2d2]">
                  <Icon><BarsInFrame /><PlusMark x={15} y={16} color="#666666" /></Icon>
                </div>
                <div className="flex w-[32px] items-center justify-center border-r border-[#d2d2d2]">
                  <Icon><path d="M11 15H3V4h13v7M3 9.5h13M9 4v11" /><PlusMark x={15} y={15} color="#666666" /></Icon>
                </div>
                <div className="flex w-[32px] items-center justify-center border-r border-[#d2d2d2]">
                  <Icon><path d="M3 5l6-1.500 5 1.500 1 6M3 5v10l6-1.500M9 3.500V13" /><PlusMark x={15} y={15} color="#666666" /></Icon>
                </div>
              </div>
              {/* status bar */}
              <div className="flex h-[23px] shrink-0 items-center bg-[#ededed] pl-[5px] text-[13px] whitespace-nowrap text-[#333333]">
                <span className="w-[84px] pt-[3px]">31 个标记</span>
                <span className="w-[98px] pt-[3px]">31 行 x 1 列</span>
                <span className="pt-[3px]">总计(交易金额): 98,644,384</span>
                <div className="ml-auto flex h-full">
                  <div className="w-[157px] border-l border-[#cccccc]" />
                  <div className="w-[4px] border-l border-[#cccccc]" />
                </div>
              </div>
            </div>

            {/* show me */}
            <div className="flex min-w-0 flex-1 flex-col border-x border-r-[#b5b5b5] border-l-[#dddddd] bg-[#fafafa] pt-[22px] pl-[15px]">
              <div className="grid grid-cols-[69px_69px_69px] grid-rows-[repeat(8,52px)] gap-x-[6px] gap-y-[5px]">
                {thumbs.map((t, i) => (
                  <div key={i} className={`overflow-hidden bg-white ${i === 6 ? "border-2 border-[#e0692f]" : "border border-[#dddddd]"}`}>
                    <svg viewBox="1 1 67 50" className="block h-full w-full">{t}</svg>
                  </div>
                ))}
              </div>
              <div className="mt-[23px] text-[15px] leading-[18px] text-[#222222]">
                <div className="pl-[2px]">对于水平条，尝试</div>
                <div className="mt-[11px] flex h-[24px] items-center pl-[2px]">
                  <span className="w-[78px] whitespace-nowrap">0 个或多个</span>
                  <div className="flex h-[24px] w-[60px] items-center justify-center rounded-full bg-[#4996b2] text-white">维度</div>
                </div>
                <div className="mt-[10px] flex h-[24px] items-center pl-[2px]">
                  <span className="w-[78px] whitespace-nowrap">1 个或多个</span>
                  <div className="flex h-[24px] w-[60px] items-center justify-center rounded-full bg-[#00b180] text-white">度量</div>
                </div>
              </div>
            </div>
          </div>
        </div>
        <div className="min-w-0 flex-1 bg-[#ececec]" />
      </div>

      <div className="flex h-[4px] shrink-0 bg-[#e4e4e4]" />

      {/* field being dragged, and the red annotation arrow on top of the screenshot */}
      <div className="absolute top-[377px] left-[269px] flex h-[24px] w-[177px] items-center rounded-full bg-[#4996b2]/60 pl-[13px] text-[14px] text-white shadow-[3px_3px_0_rgba(0,0,0,0.12)]">类别</div>
      <svg width="200" height="70" viewBox="0 0 200 70" className="absolute top-[325px] left-[100px]">
        <path d="M2 6L164 42L168 40L188 55L163 61L165 51Z" fill="#f4403e" />
      </svg>
    </div>
  );
}
